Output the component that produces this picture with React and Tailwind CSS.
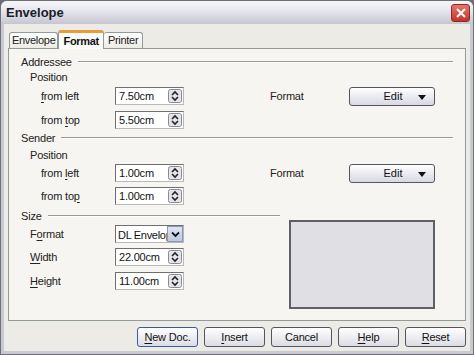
import React from 'react';

function Acc({ text, at }) {
    // underline the accelerator letter at index `at`
    if (at === undefined || at < 0) return <>{text}</>;
    return (
        <>
            {text.slice(0, at)}
            <span className="underline underline-offset-[2px]">{text[at]}</span>
            {text.slice(at + 1)}
        </>
    );
}

function Spin() {
    return (
        <svg width="14" height="14" viewBox="0 0 14 14" className="shrink-0">
            <rect x="0.5" y="0.5" width="13" height="13" rx="2" fill="#e4e4ea" stroke="#8a8a94" />
            <path d="M4 6 L7 3 L10 6" fill="none" stroke="#222" strokeWidth="1.6" />
            <path d="M4 8 L7 11 L10 8" fill="none" stroke="#222" strokeWidth="1.6" />
        </svg>
    );
}

function SpinField({ value }) {
    return (
        <div className="w-[69px] h-[18px] bg-white border border-[#6f6f6f] border-b-[#b8b8b8] border-r-[#b8b8b8] flex items-center justify-between pl-[3px] pr-[1px]">
            <span className="text-[11px] tracking-[-0.2px] text-[#111]">{value}</span>
            <Spin />
        </div>
    );
}

function SelectField({ value }) {
    return (
        <div className="w-[69px] h-[18px] bg-white border border-[#6f6f6f] border-b-[#b8b8b8] border-r-[#b8b8b8] relative overflow-hidden">
            <span className="absolute left-[2px] top-[1px] text-[11px] tracking-[-0.3px] text-[#111] whitespace-nowrap">{value}</span>
            <div className="absolute right-0 top-0 w-[16px] h-[16px] bg-gradient-to-b from-[#dfe6f4] to-[#bcc8e0] border border-[#8c98b4] flex items-center justify-center">
                <svg width="9" height="7" viewBox="0 0 9 7">
                    <path d="M1 1.5 L4.5 5 L8 1.5" fill="none" stroke="#111" strokeWidth="1.8" />
                </svg>
            </div>
        </div>
    );
}

function EditButton() {
    return (
        <div className="w-[86px] h-[19px] rounded-[3px] border border-[#55555f] bg-gradient-to-b from-[#ffffff] to-[#d8d8e2] flex items-center relative">
            <span className="flex-1 text-center text-[11px] text-[#111] pl-[2px]">Edit</span>
            <svg width="8" height="5" viewBox="0 0 8 5" className="absolute right-[8px] top-[7px]">
                <path d="M0 0 H8 L4 5 Z" fill="#111" />
            </svg>
        </div>
    );
}

function Header({ text, width }) {
    return (
        <div className="h-[16px] flex items-center">
            <span className="ml-[12px] text-[11px] tracking-[-0.2px] text-[#222]">{text}</span>
            <div className={`flex-1 h-0 border-t border-[#9a9a9a] border-b-white border-b ml-[6px] ${width}`} />
        </div>
    );
}

function FieldRow({ label, at, value, edit, mt }) {
    return (
        <div className={`h-[18px] flex items-center ${mt}`}>
            <span className="ml-[32px] w-[74px] text-[11px] tracking-[-0.2px] text-[#222]"><Acc text={label} at={at} /></span>
            <SpinField value={value} />
            {edit && (
                <>
                    <span className="ml-[86px] w-[79px] text-[11px] tracking-[-0.2px] text-[#222]">Format</span>
                    <EditButton />
                </>
            )}
        </div>
    );
}

function DialogButton({ label, at, primary }) {
    return (
        <div className={`w-[61px] h-[20px] rounded-[3px] border ${primary ? 'border-[#3c5a9a]' : 'border-[#55555f]'} bg-gradient-to-b from-[#ffffff] to-[#dcdce4] flex items-center justify-center text-[11px] tracking-[-0.2px] text-[#111]`}>
            <Acc text={label} at={at} />
        </div>
    );
}

export default function App() {
    return (
        <div className="w-[474px] h-[355px] overflow-hidden bg-[#6f6f7a] p-px font-['Liberation_Sans',Tahoma,sans-serif]">
            <div className="w-full h-full bg-[#c9c9d2] px-[3px] pb-[3px] flex flex-col rounded-t-[6px]">
                <div className="h-[23px] -mx-[3px] rounded-t-[6px] bg-gradient-to-b from-[#f8f8fa] via-[#e2e2ea] to-[#c6c6d2] flex items-center justify-between pl-[5px] pr-[3px]">
                    <span className="text-[13px] font-bold text-[#1b1b28]">Envelope</span>
                    <div className="w-[19px] h-[18px] rounded-[3px] bg-gradient-to-b from-[#e8756a] to-[#c0332a] border border-[#8e2a24] flex items-center justify-center">
                        <svg width="10" height="10" viewBox="0 0 10 10">
                            <path d="M1 1 L9 9 M9 1 L1 9" stroke="#fff" strokeWidth="2" />
                        </svg>
                    </div>
                </div>
                <div className="flex-1 bg-[#ecebe6] flex flex-col px-[4px]">
                    <div className="flex items-end h-[24px] pl-[1px]">
                        <div className="h-[16px] px-[2px] border border-b-0 border-[#919b9c] rounded-t-[3px] bg-gradient-to-b from-white to-[#ecebe5] text-[11px] tracking-[-0.3px] text-[#222] flex items-center">Envelope</div>
                        <div className="h-[19px] px-[4px] border border-b-0 border-[#919b9c] border-t-[3px] border-t-[#e89a3c] rounded-t-[3px] bg-[#fbfbf9] text-[11px] tracking-[-0.3px] font-bold text-[#111] flex items-center -mb-px relative z-10">Format</div>
                        <div className="h-[16px] px-[4px] border border-b-0 border-l-0 border-[#919b9c] rounded-t-[3px] bg-gradient-to-b from-white to-[#ecebe5] text-[11px] tracking-[-0.3px] text-[#222] flex items-center">Printer</div>
                    </div>
                    <div className="h-[273px] border border-[#919b9c] bg-[#f6f5f1] flex flex-col pt-[5px]">
                        <Header text="Addressee" width="mr-[12px]" />
                        <div className="h-[15px] flex items-center"><span className="ml-[21px] text-[11px] tracking-[-0.2px] text-[#222]">Position</span></div>
                        <FieldRow label="from left" at={0} value="7.50cm" edit mt="mt-[2px]" />
                        <FieldRow label="from top" at={5} value="5.50cm" mt="mt-[6px]" />
                        <div className="mt-px"><Header text="Sender" width="mr-[12px]" /></div>
                        <div className="h-[15px] mt-[2px] flex items-center"><span className="ml-[21px] text-[11px] tracking-[-0.2px] text-[#222]">Position</span></div>
                        <FieldRow label="from left" at={5} value="1.00cm" edit mt="mt-px" />
                        <FieldRow label="from top" at={7} value="1.00cm" mt="mt-[5px]" />
                        <div className="flex mt-[3px]">
                            <div className="w-[271px] flex flex-col">
                                <Header text="Size" width="" />
                                <div className="h-[18px] mt-px flex items-center">
                                    <span className="ml-[21px] w-[85px] text-[11px] tracking-[-0.2px] text-[#222]"><Acc text="Format" at={1} /></span>
                                    <SelectField value="DL Envelope" />
                                </div>
                                <div className="h-[18px] mt-[5px] flex items-center">
                                    <span className="ml-[21px] w-[85px] text-[11px] tracking-[-0.2px] text-[#222]"><Acc text="Width" at={0} /></span>
                                    <SpinField value="22.00cm" />
                                </div>
                                <div className="h-[18px] mt-[6px] flex items-center">
                                    <span className="ml-[21px] w-[85px] text-[11px] tracking-[-0.2px] text-[#222]"><Acc text="Height" at={0} /></span>
                                    <SpinField value="11.00cm" />
                                </div>
                            </div>
                            <div className="ml-[9px] mt-[12px] w-[146px] h-[89px] border-2 border-[#5f5f66] bg-[#e0dfe4]" />
                        </div>
                    </div>
                    <div className="flex justify-end gap-[6px] mt-[6px]">
                        <DialogButton label="New Doc." at={0} primary />
                        <DialogButton label="Insert" at={0} />
                        <DialogButton label="Cancel" />
                        <DialogButton label="Help" at={0} />
                        <DialogButton label="Reset" at={0} />
                    </div>
                </div>
            </div>
        </div>
    );
}
